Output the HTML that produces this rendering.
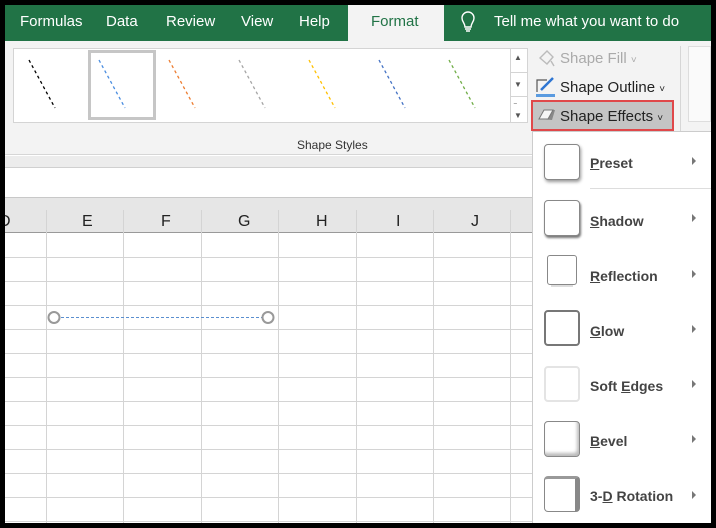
<!DOCTYPE html>
<html><head><style>
*{margin:0;padding:0;box-sizing:border-box}
body{width:716px;height:528px;background:#000;position:relative;overflow:hidden;font-family:"Liberation Sans",sans-serif}
.a{position:absolute}
.tab{position:absolute;top:13px;color:#fff;font-size:15px}
.mi{position:absolute;left:590px;font-size:14px;font-weight:bold;color:#444}
.mi u{text-decoration:underline}
.ic{position:absolute;left:544px;width:36px;height:36px;background:#fff;border:1px solid #888;border-radius:4px}
.ar{position:absolute;left:692px;width:0;height:0;border-left:4px solid #777;border-top:4px solid transparent;border-bottom:4px solid transparent}
.col{position:absolute;top:213px;font-size:16px;color:#222}
</style></head><body>
<div class="a" style="left:5px;top:5px;width:706px;height:518px;background:#fff"></div>
<div class="a" style="left:5px;top:5px;width:706px;height:36px;background:#217346"></div>
<div class="a" style="left:348px;top:5px;width:96px;height:36px;background:#f3f3f3"></div>
<span class="tab" style="left:20px">Formulas</span>
<span class="tab" style="left:106px">Data</span>
<span class="tab" style="left:166px">Review</span>
<span class="tab" style="left:241px">View</span>
<span class="tab" style="left:299px">Help</span>
<span class="tab" style="left:371px;color:#217346">Format</span>
<svg class="a" style="left:460px;top:11px" width="16" height="24" viewBox="0 0 16 24"><path d="M5 16 C5 12 2 11 2 7 A6 6 0 0 1 14 7 C14 11 11 12 11 16 Z M5 18h6 M6 20h4" fill="none" stroke="#fff" stroke-width="1.4"/></svg>
<span class="tab" style="left:494px">Tell me what you want to do</span>
<div class="a" style="left:5px;top:41px;width:706px;height:114px;background:#f3f3f3;border-bottom:1px solid #d6d6d6"></div>
<div class="a" style="left:13px;top:48px;width:515px;height:75px;background:#fff;border:1px solid #d4d4d4"></div>
<div class="a" style="left:510px;top:48px;width:18px;height:75px;border-left:1px solid #d4d4d4"></div>
<div class="a" style="left:510px;top:72px;width:18px;height:25px;border-top:1px solid #d4d4d4;border-bottom:1px solid #d4d4d4"></div>
<span class="a" style="left:514px;top:53px;font-size:8px;color:#555">▲</span>
<span class="a" style="left:514px;top:80px;font-size:8px;color:#555">▼</span>
<span class="a" style="left:514px;top:104px;font-size:8px;color:#555;line-height:8px">‾<br>▼</span>
<div class="a" style="left:88px;top:50px;width:68px;height:70px;border:3px solid #c6c6c6"></div>
<svg class="a" style="left:13px;top:48px" width="497" height="75">
<g stroke-width="1.3" stroke-dasharray="3,3">
<line x1="16" y1="12" x2="42" y2="60" stroke="#000"/>
<line x1="86" y1="12" x2="112" y2="60" stroke="#4a8de0"/>
<line x1="156" y1="12" x2="182" y2="60" stroke="#ed7d31"/>
<line x1="226" y1="12" x2="252" y2="60" stroke="#a5a5a5"/>
<line x1="296" y1="12" x2="322" y2="60" stroke="#ffc000"/>
<line x1="366" y1="12" x2="392" y2="60" stroke="#4472c4"/>
<line x1="436" y1="12" x2="462" y2="60" stroke="#70ad47"/>
</g></svg>
<span class="a" style="left:297px;top:138px;font-size:12px;color:#333">Shape Styles</span>
<svg class="a" style="left:537px;top:48px" width="20" height="20"><path d="M3 10 L10 3 L16 9 L10 16 Z M14 13 l3 5" fill="none" stroke="#bbb" stroke-width="1.4"/></svg>
<span class="a" style="left:560px;top:50px;font-size:15px;color:#aaa">Shape Fill <span style="font-size:10px">˅</span></span>
<svg class="a" style="left:535px;top:76px" width="22" height="22"><path d="M2 16V4h10" fill="none" stroke="#555" stroke-width="1.2"/><path d="M6 14 L18 2" stroke="#2e75d2" stroke-width="2.5"/><rect x="1" y="18" width="19" height="3" fill="#5a9be0"/></svg>
<span class="a" style="left:560px;top:79px;font-size:15px;color:#222">Shape Outline <span style="font-size:10px">˅</span></span>
<div class="a" style="left:531px;top:100px;width:143px;height:31px;background:#c4c4c4;border:2px solid #e0484a"></div>
<svg class="a" style="left:536px;top:105px" width="22" height="20"><path d="M3 14 L8 5 L19 5 L16 15 Z" fill="#888"/><path d="M3 14 L8 5 L17 5 L12 14 Z" fill="#f5f5f5" stroke="#777"/></svg>
<span class="a" style="left:560px;top:108px;font-size:15px;color:#222">Shape Effects <span style="font-size:10px">˅</span></span>
<div class="a" style="left:680px;top:46px;width:1px;height:100px;background:#d6d6d6"></div>
<div class="a" style="left:688px;top:46px;width:23px;height:76px;background:#fafafa;border:1px solid #ddd"></div>
<div class="a" style="left:5px;top:156px;width:706px;height:12px;background:#ececec;border-bottom:1px solid #d0d0d0"></div>
<div class="a" style="left:5px;top:197px;width:706px;height:36px;background:#e6e6e6;border-top:1px solid #c8c8c8;border-bottom:1px solid #999;overflow:hidden">
<span class="a" style="left:-6px;top:15px;font-size:16px;color:#222">D</span>
</div>
<span class="col" style="left:82px">E</span>
<span class="col" style="left:161px">F</span>
<span class="col" style="left:238px">G</span>
<span class="col" style="left:316px">H</span>
<span class="col" style="left:396px">I</span>
<span class="col" style="left:471px">J</span>
<svg class="a" style="left:5px;top:197px" width="706" height="326">
<g stroke="#d4d4d4" stroke-width="1">
<line x1="41.5" y1="13" x2="41.5" y2="326"/><line x1="118.5" y1="13" x2="118.5" y2="326"/><line x1="196.5" y1="13" x2="196.5" y2="326"/><line x1="273.5" y1="13" x2="273.5" y2="326"/><line x1="351.5" y1="13" x2="351.5" y2="326"/><line x1="428.5" y1="13" x2="428.5" y2="326"/><line x1="505.5" y1="13" x2="505.5" y2="326"/>
<line x1="0" x2="706" y1="60.5" y2="60.5"/><line x1="0" x2="706" y1="84.5" y2="84.5"/><line x1="0" x2="706" y1="108.5" y2="108.5"/><line x1="0" x2="706" y1="132.5" y2="132.5"/><line x1="0" x2="706" y1="156.5" y2="156.5"/><line x1="0" x2="706" y1="180.5" y2="180.5"/><line x1="0" x2="706" y1="204.5" y2="204.5"/><line x1="0" x2="706" y1="228.5" y2="228.5"/><line x1="0" x2="706" y1="252.5" y2="252.5"/><line x1="0" x2="706" y1="276.5" y2="276.5"/><line x1="0" x2="706" y1="300.5" y2="300.5"/><line x1="0" x2="706" y1="324.5" y2="324.5"/>
</g>
<line x1="56" y1="120.5" x2="257" y2="120.5" stroke="#5b8fcf" stroke-dasharray="3,2"/>
<circle cx="49" cy="120.5" r="5.5" fill="#fff" stroke="#999" stroke-width="2"/>
<circle cx="263" cy="120.5" r="5.5" fill="#fff" stroke="#999" stroke-width="2"/>
</svg>
<div class="a" style="left:532px;top:131px;width:179px;height:392px;background:#fff;border-left:1px solid #ccc;border-top:1px solid #ccc"></div>
<div class="a" style="left:590px;top:188px;width:121px;height:1px;background:#ddd"></div>
<div class="ic" style="top:144px;box-shadow:1px 2px 3px #999"></div>
<div class="ic" style="top:200px;box-shadow:1px 2px 2px #777"></div>
<div class="ic" style="top:255px;height:30px;left:547px;width:30px;border-radius:3px;box-shadow:0 6px 0 -4px #ddd"></div>
<div class="ic" style="top:310px;border:2px solid #777"></div>
<div class="ic" style="top:366px;border:2px solid #e4e4e4"></div>
<div class="ic" style="top:421px;box-shadow:inset -2px -3px 3px #bbb"></div>
<div class="ic" style="top:476px;border-right:5px solid #888;border-top:3px solid #999"></div>
<span class="mi" style="top:155px"><u>P</u>reset</span>
<span class="mi" style="top:213px"><u>S</u>hadow</span>
<span class="mi" style="top:268px"><u>R</u>eflection</span>
<span class="mi" style="top:323px"><u>G</u>low</span>
<span class="mi" style="top:378px">Soft <u>E</u>dges</span>
<span class="mi" style="top:433px"><u>B</u>evel</span>
<span class="mi" style="top:488px">3-<u>D</u> Rotation</span>
<div class="ar" style="top:157px"></div><div class="ar" style="top:214px"></div><div class="ar" style="top:270px"></div><div class="ar" style="top:325px"></div><div class="ar" style="top:380px"></div><div class="ar" style="top:435px"></div><div class="ar" style="top:491px"></div>
</body></html>
